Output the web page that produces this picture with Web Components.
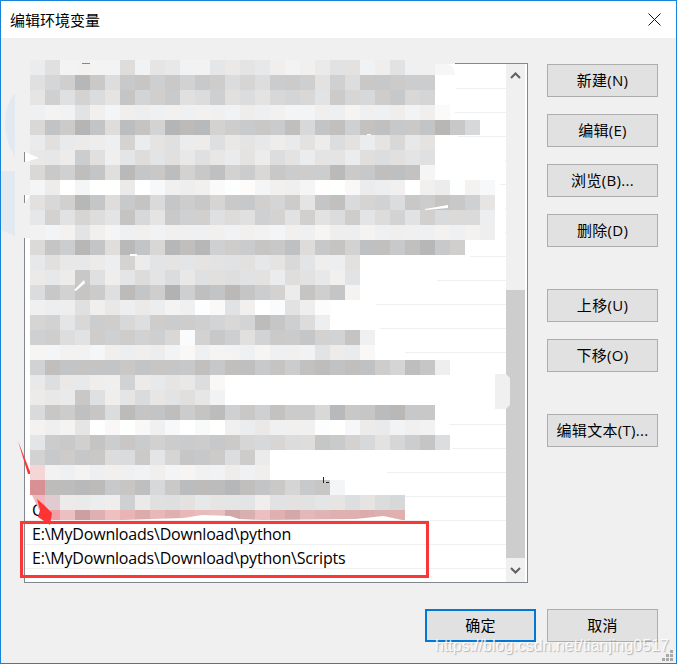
<!DOCTYPE html>
<html>
<head>
<meta charset="utf-8">
<title>编辑环境变量</title>
<style>
  html, body { margin: 0; padding: 0; background: #f0f0f0; }
  body { font: 15px "Open Sans", "Noto Sans CJK SC", sans-serif; color: #000; }
</style>
</head>
<body>
<env-dialog>
  <span slot="title">编辑环境变量</span>
  <env-list slot="list">
    <list-row></list-row><list-row></list-row><list-row></list-row><list-row></list-row>
    <list-row></list-row><list-row></list-row><list-row></list-row><list-row></list-row>
    <list-row></list-row><list-row></list-row><list-row></list-row><list-row></list-row>
    <list-row></list-row><list-row></list-row><list-row></list-row><list-row></list-row>
    <list-row></list-row><list-row></list-row>
    <list-row>C</list-row>
    <list-row>E:\MyDownloads\Download\python</list-row>
    <list-row>E:\MyDownloads\Download\python\Scripts</list-row>
  </env-list>
  <side-button slot="side">新建(N)</side-button>
  <side-button slot="side">编辑(E)</side-button>
  <side-button slot="side">浏览(B)...</side-button>
  <side-button slot="side">删除(D)</side-button>
  <side-button slot="side" class="group">上移(U)</side-button>
  <side-button slot="side">下移(O)</side-button>
  <side-button slot="side" class="group">编辑文本(T)...</side-button>
  <side-button slot="foot" primary>确定</side-button>
  <side-button slot="foot">取消</side-button>
  <blur-paint slot="paint"></blur-paint>
</env-dialog>

<script>
class EnvDialog extends HTMLElement {
  constructor() {
    super();
    this.attachShadow({ mode: "open" });
    this.shadowRoot.innerHTML = `
      <style>
        :host { display: block; position: relative; width: 677px; height: 664px; box-sizing: border-box;
          border: 1px solid #1883d7; background: #f0f0f0; overflow: hidden; }
        .title { display: flex; align-items: center; justify-content: space-between; box-sizing: border-box; height: 37px; background: #fff;
          padding: 0 15px 1px 9px; font: 15px "Noto Sans CJK SC", sans-serif; }
        .title svg { display: block; }
        .main { display: flex; padding: 25px 0 0 23px; }
        .side { display: flex; flex-direction: column; gap: 17px; margin: 1px 0 0 19px; }
        .foot { display: flex; justify-content: flex-end; gap: 11px; margin: 26px 18px 0 0; }
        .mark { position: absolute; left: 434px; top: 636px; font: 16px/18px "Liberation Sans", sans-serif; white-space: nowrap;
          color: rgba(255,255,255,.88); text-shadow: 1px 1px 1px rgba(130,130,130,.55); }
        .grip { position: absolute; right: 2px; bottom: 1px; }
      </style>
      <div class="title">
        <slot name="title"></slot>
        <svg width="13" height="13" viewBox="0 0 13 13"><path d="M.5.5l12 12M12.5.5l-12 12" stroke="#111" fill="none"/></svg>
      </div>
      <div class="main">
        <slot name="list"></slot>
        <div class="side"><slot name="side"></slot></div>
      </div>
      <div class="foot"><slot name="foot"></slot></div>
      <slot name="paint"></slot>
      <div class="mark">https://blog.csdn.net/tianjing0517</div>
      <svg class="grip" width="12" height="12" viewBox="0 0 12 12" fill="#a8a8a8">
        <rect x="8" y="0" width="3" height="3"/><rect x="4" y="4" width="3" height="3"/><rect x="8" y="4" width="3" height="3"/>
        <rect x="0" y="8" width="3" height="3"/><rect x="4" y="8" width="3" height="3"/><rect x="8" y="8" width="3" height="3"/>
      </svg>`;
  }
}

class EnvList extends HTMLElement {
  constructor() {
    super();
    this.attachShadow({ mode: "open" });
    this.shadowRoot.innerHTML = `
      <style>
        :host { display: flex; box-sizing: border-box; width: 504px; height: 520px; border: 1px solid #828790; background: #fff; }
        .rows { width: 481px; padding-top: 1px; }
      </style>
      <div class="rows"><slot></slot></div>
      <scroll-bar></scroll-bar>`;
  }
}

class ListRow extends HTMLElement {
  constructor() {
    super();
    this.attachShadow({ mode: "open" });
    this.shadowRoot.innerHTML = `
      <style>
        :host { display: flex; align-items: center; box-sizing: border-box; height: 24px; padding: 2px 0 0 7px;
          border-bottom: 1px solid #f0f0f0; font: 16px "Open Sans", sans-serif; letter-spacing: -.2px; white-space: nowrap; }
      </style>
      <slot></slot>`;
  }
}

class ScrollBar extends HTMLElement {
  constructor() {
    super();
    this.attachShadow({ mode: "open" });
    this.shadowRoot.innerHTML = `
      <style>
        :host { display: flex; flex-direction: column; width: 19px; height: 518px; background: #f0f0f0; }
        .btn { display: flex; align-items: center; justify-content: center; height: 24px; }
        .space { height: 203px; }
        .thumb { height: 269px; background: #cdcdcd; }
      </style>
      <div class="btn"><svg width="11" height="7" viewBox="0 0 11 7"><path d="M1 6l4.5-4.5L10 6" fill="none" stroke="#606060" stroke-width="2"/></svg></div>
      <div class="space"></div>
      <div class="thumb"></div>
      <div class="btn"><svg width="11" height="7" viewBox="0 0 11 7"><path d="M1 1l4.5 4.5L10 1" fill="none" stroke="#606060" stroke-width="2"/></svg></div>`;
  }
}

class SideButton extends HTMLElement {
  constructor() {
    super();
    this.attachShadow({ mode: "open" });
    this.shadowRoot.innerHTML = `
      <style>
        :host { display: flex; align-items: center; justify-content: center; box-sizing: border-box; width: 111px; height: 33px; padding-bottom: 2px;
          border: 1px solid #adadad; background: #e1e1e1; font: 15px "Open Sans", "Noto Sans CJK SC", sans-serif; letter-spacing: .3px; white-space: nowrap; }
        :host([primary]) { border: 2px solid #0078d7; }
        :host(.group) { margin-top: 25px; }
      </style>
      <slot></slot>`;
  }
}

// pixelated smear that hides the other path entries, one row of 15px cells per line
const BLUR_ROWS = [
  "ec e0 f3 f2 f3 f3 dd f2 e5 e8 f2 f2 e6 e9 e4 e8 ef f3 f0 ea e2 e2 f2 ee e2 f0 f0",
  "e0 d6 cf b7 c9 dd c9 c6 cf c9 d2 c9 cd dc d5 dd cc cb cf e2 d0 dd c8 c8 cb cd cd",
  "e5 d0 e0 d3 dc e4 c5 d4 cf ca e0 dc cf e0 dc e3 d8 d5 d8 e3 cb d6 d8 cd c8 d8 d5",
  "f0 f3 f2 e3 f0 f5 ef ee f0 f1 f0 f1 f0 f2 ed ef f1 f4 f4 ef ef f4 f0 f0 ee f3 ef fa",
  "d8 c3 cb b5 c4 dd bd c4 d3 b5 bb b9 d2 cd ca c8 cb bf d8 c4 c0 d0 c2 c0 c8 c9 c4 b7 c8 d8",
  "eb e0 ea eb ed ef d3 ec e4 e0 ec ec df e8 e4 e8 ed ea e2 ec dd e2 ec e4 d8 e8 e3",
  "e8 e7 ec cd e0 ef e5 dd e4 e0 e8 e0 e7 eb e3 ec dd e3 ec e4 e4 ec df dd e0 e4 e0",
  "d8 c9 d0 be c5 df b9 c6 c8 bd d2 c8 c0 d2 cc d8 c8 cc cd cd ba ca c8 bf bf c2 f5",
  "f5 ec ff f5 ff ff ea ff f8 f0 ee f0 fa ff fc f5 f0 ef f5 fe ff f8 ec ee f0 ff f0 ec ff f2 f8",
  "e1 d8 d0 b7 c6 dd c9 c4 da c6 cd c8 d5 c9 c8 d0 d5 cc e4 c5 c0 da d4 d2 dc c8 cc c4 c8 d0 e5",
  "e7 d2 e2 d5 dd e4 c4 d8 e4 c9 d0 d0 e0 dc e0 d0 d3 e2 d0 e2 dc cd e4 dc d3 e2 d0 da da da ee",
  "f2 f4 f2 e4 f0 f5 f0 f0 f2 f0 f0 f0 f0 f2 f0 f2 f5 f0 f0 f5 ee ee f3 f0 ef f0 f0 f2 f0 f2 ee",
  "da c5 cd b7 c5 de b9 c4 d7 b7 bf b7 d0 cd cb c5 c8 c0 dc c8 c4 d2 c0 c0 c9 c0 b7 c9 cf",
  "e8 e0 e8 e8 eb ee d3 ec e4 e4 e5 e4 e3 e2 e1 e7 e4 d9 e4 ee ee e1",
  "ea e8 ec c8 e0 ee e5 dc e4 dc e8 e0 e0 de e2 e2 ec de e2 e8 f0 e3",
  "dc c8 d2 c5 cb df bb c5 ce b2 cf bf c4 b9 c5 cd d2 ec c4 cf c5 f3",
  "f0 ee ee e0 ef e8 ee ea ed f3 f0 fe f9 e2 f0 ff fb e2 ee fc",
  "d5 d2 e5 d8 cd ce d8 de cd cc cd cf d4 d8 d4 bc c6 cf dc ee",
  "d0 ce dd e2 cd d0 cd d2 cf d8 fb d2 c8 cf e0 d3 ca cb c6 d2 d3 c4 f0",
  "f5 f5 f2 f2 f6 ef ee ef ed f3 f8 f0 f4 f3 f0 f5 f0 f0 f2 e3 ec eb f8",
  "d2 bf c4 c4 c4 c4 c8 c4 c6 c6 c8 c0 c8 bf bf c9 c4 cc c1 bd c2 bf c1 cd d5 be c6 ee",
  "e9 de e9 e9 ee ef d2 eb e9 e5 e8 dd f8",
  "eb e8 ea c8 e0 ee e5 db e6 e3 df e6 f2",
  "da c7 cc c0 c6 dc bb c5 c4 be cc c4 bc d0 c8 d0 c2 cb cb d8 b9 c8 c6 bb b8 c8 c8",
  "f2 ef f3 e5 ff f8 ff f8 f0 f8 ff f9 ff f0 ec e9 f0 f0 f0 fd ff f7 eb ea f3 f0 f2",
  "e5 cc c9 d0 c4 cd c7 cb d1 cc cb cc c8 ca d6 d8 d6 dc dd c6 ca d2 d8 e2 d6 cd c5 dd",
  "d2 c9 cc c7 c8 dc db ca e5 d5 c6 c8 cb dd cc eb",
  "f5d6d6 f2 f0 f3 ef f0 f0 f2 ef f4 f5 f1 f2 ed f1 ef",
  "d89094 bc bc b9 bb c9 c6 bf d8 c9 bc bc bc b7 bf c4 c9 d5 c9 c6 f5",
  "-- e0ccd0 eb ea ed ee d0 ea e0 df e2 e8 e5 e5 e4 ee e2 e2 e2 e5 e5 de e4 dc d8",
  "-- f0a0a4 ecc0c0 cca0a0 dfb0b2 efc0c0 e8b4b4 dcacac e8b8b8 e0b0b0 e8b8b8 e8bcbc e8c0c0 d0a8a8 d8b0b0 ecc0c0 e0b0b0 d4a8a8 e4b8b8 e0b4b4 dfb0b0 dfb0b0 dcacac dcb0b0 e0b0b0"
];

// where each separator line comes out from under the white paint
const LINE_STARTS = { 88: 456, 112: 455, 136: 458, 160: 505, 184: 500, 208: 505, 232: 505, 256: 470, 280: 437,
  304: 376, 328: 380, 352: 405, 376: 505, 400: 505, 424: 449, 448: 452, 472: 387, 496: 405 };

function cellColor(token, row, col) {
  if (token === "--") return "transparent";
  if (token.length === 6) return "#" + token;
  // a little warm/cool drift, the real smear is not pure grey
  let v = parseInt(token, 16);
  let t = ((row * 7 + col * 13) % 5) - 2;
  return `rgb(${Math.min(255, v + t)},${v},${Math.min(255, v - t)})`;
}

class BlurPaint extends HTMLElement {
  constructor() {
    super();
    this.attachShadow({ mode: "open" });
    let whites = Object.entries(LINE_STARTS)
      .map(([y, x]) => `<rect x="25" y="${y}" width="${x - 25}" height="1"/>`).join("");
    let rows = BLUR_ROWS.map((line, r) =>
      `<div class="row">${line.split(" ").map((t, c) => `<i style="background:${cellColor(t, r, c)}"></i>`).join("")}</div>`
    ).join("");
    this.shadowRoot.innerHTML = `
      <style>
        :host { display: block; position: absolute; left: -1px; top: -1px; width: 677px; height: 664px; pointer-events: none; }
        svg { position: absolute; left: 0; top: 0; }
        .grid { position: absolute; left: 30px; top: 60px; }
        .row { display: flex; height: 15px; }
        .row i { display: block; width: 15px; height: 100%; }
        .row:last-child { height: 10px;
          clip-path: polygon(0 0, 100% 0, 100% 20%, 97% 70%, 90% 100%, 80% 100%, 76% 60%, 70% 90%, 50% 100%, 45% 90%, 43% 60%, 37% 50%, 33% 80%, 20% 100%, 5% 100%, 0 60%); }
      </style>
      <svg width="677" height="664">
        <g fill="#fff">${whites}</g>
        <path d="M15 93Q5 105 5 123T15 157V171H1V230L15 236Z" fill="#e2e9f1"/>
        <path d="M24 60H455V64H24ZM20 60H30V238H24L18 228V100L15 80Q15 62 20 60Z" fill="#f0f0f0"/>
        <path d="M435 64H447Q455 66 455 75H435Z" fill="#f6f6f6"/>
        <path d="M495 374H506L510 378V405L506 409H495Z" fill="#f0f0f0"/>
        <path d="M32 495H45V510H39Z" fill="#eeb8bc"/>
        <path d="M18 441L31 474H28Z" fill="#ff3333"/>
      </svg>
      <div class="grid">${rows}</div>
      <svg width="677" height="664">
        <rect x="82" y="63" width="8" height="1" fill="#888"/>
        <rect x="24" y="152" width="1" height="10" fill="#888"/>
        <rect x="24" y="195" width="1" height="8" fill="#888"/>
        <path d="M25 152L39 158L25 162Z" fill="#fff"/>
        <path d="M25 195H30L25 203Z" fill="#fff"/>
        <path d="M74 290L84 280L85 283L76 291Z M130 254H137V256H130Z M425 209L448 205V208L425 210Z M367 134H371V135H367Z" fill="#fff"/>
        <path d="M323 477h1v6h-1zM326 482h3v1h-3z" fill="#222"/>
        <rect x="21.5" y="522.5" width="406" height="54" fill="none" stroke="#fb3636" stroke-width="3"/>
        <path d="M37 499L44 505L52 513L50 525L38 517L40 510Z" fill="#ff3333"/>
      </svg>`;
  }
}

customElements.define("env-dialog", EnvDialog);
customElements.define("env-list", EnvList);
customElements.define("list-row", ListRow);
customElements.define("scroll-bar", ScrollBar);
customElements.define("side-button", SideButton);
customElements.define("blur-paint", BlurPaint);
</script>
</body>
</html>
